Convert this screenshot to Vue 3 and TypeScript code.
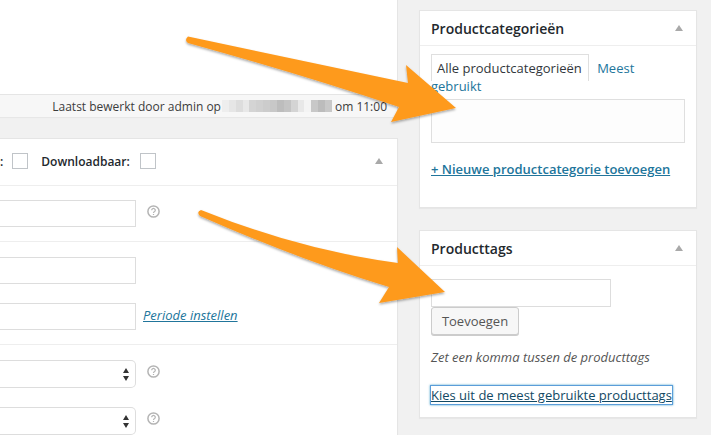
<script setup lang="ts">
const blurCells: string[] = ['#eee','#e6e6e6','#ddd','#e8e8e8','#d4d4d4','#d0d0d0','#ccc','#c8c8c8','#bdbdbd','#c4c4c4','#d4d4d4','#e8e8e8','#f4f4f4','#c8c8c8','#bcbcbc','#c8c8c8']
</script>

<template>
  <div class="page">
    <main class="main">
      <div class="editor"></div>
      <div class="status">
        <span>Laatst bewerkt door admin op</span>
        <span class="blur"><i v-for="(c, i) in blurCells" :key="i" :style="{ background: c }"></i></span>
        <span>om 11:00</span>
      </div>
      <section class="card product">
        <header class="product-head">
          <span>:</span><span class="check first"></span>
          <span class="dl">Downloadbaar:</span><span class="check"></span>
          <span class="tri left-tri"></span>
        </header>
        <div class="group g1">
          <div class="row">
            <span class="field"></span>
            <svg class="help" viewBox="0 0 13 13" width="13" height="13"><circle cx="6.5" cy="6.5" r="5.6" fill="none" stroke="#b4b4b4" stroke-width="1.5"/><path d="M4.7 5.2a1.8 1.7 0 1 1 2.8 1.4c-.7.4-1 .7-1 1.5M6.5 9v1.1" fill="none" stroke="#b4b4b4" stroke-width="1.2"/></svg>
          </div>
        </div>
        <div class="group g2">
          <div class="row"><span class="field"></span></div>
          <div class="row r2"><span class="field"></span><a class="period">Periode instellen</a></div>
        </div>
        <div class="group g3">
          <div class="row">
            <span class="field sel"><svg viewBox="0 0 6 13" width="6" height="13"><path d="M3 0 6 5H0zM3 13 0 8H6z" fill="#333"/></svg></span>
            <svg class="help" viewBox="0 0 13 13" width="13" height="13"><circle cx="6.5" cy="6.5" r="5.6" fill="none" stroke="#b4b4b4" stroke-width="1.5"/><path d="M4.7 5.2a1.8 1.7 0 1 1 2.8 1.4c-.7.4-1 .7-1 1.5M6.5 9v1.1" fill="none" stroke="#b4b4b4" stroke-width="1.2"/></svg>
          </div>
          <div class="row r2">
            <span class="field sel"><svg viewBox="0 0 6 13" width="6" height="13"><path d="M3 0 6 5H0zM3 13 0 8H6z" fill="#333"/></svg></span>
            <svg class="help" viewBox="0 0 13 13" width="13" height="13"><circle cx="6.5" cy="6.5" r="5.6" fill="none" stroke="#b4b4b4" stroke-width="1.5"/><path d="M4.7 5.2a1.8 1.7 0 1 1 2.8 1.4c-.7.4-1 .7-1 1.5M6.5 9v1.1" fill="none" stroke="#b4b4b4" stroke-width="1.2"/></svg>
          </div>
        </div>
      </section>
    </main>
    <aside class="side">
      <section class="card cat">
        <header class="box-head"><h2>Productcategorieën</h2><span class="tri"></span></header>
        <div class="cat-body">
          <div class="tabs"><span class="tab">Alle productcategorieën</span> <a class="tab-link first-word">Meest</a> <a class="tab-link">gebruikt</a></div>
          <div class="listbox"></div>
          <a class="add">+ Nieuwe productcategorie toevoegen</a>
        </div>
      </section>
      <section class="card tags">
        <header class="box-head"><h2>Producttags</h2><span class="tri"></span></header>
        <div class="tags-body">
          <span class="tag-input"></span>
          <button class="btn" type="button">Toevoegen</button>
          <p class="hint">Zet een komma tussen de producttags</p>
          <a class="focus-link">Kies uit de meest gebruikte producttags</a>
        </div>
      </section>
    </aside>
    <svg class="arrows" width="711" height="435" viewBox="0 0 711 435">
      <defs>
        <filter id="sh" x="-10%" y="-10%" width="120%" height="130%">
          <feDropShadow dx="0" dy="1.5" stdDeviation="1.2" flood-color="#000" flood-opacity=".35" />
        </filter>
      </defs>
      <path filter="url(#sh)" fill="#fe9a1e" d="M188 36.500 408 83 406 65 456 108 391 122 399 107Q300 74 188 43Q184 40 188 36.500Z" />
      <path filter="url(#sh)" fill="#fe9a1e" d="M201 210Q300 250 398 263L397 247 445 292 379 303 389 287Q300 260 200 216Q196 212 201 210Z" />
    </svg>
  </div>
</template>

<style>
html, body { margin: 0; background: #f1f1f1; }
</style>

<style scoped>
.page {
  position: relative;
  width: 711px;
  height: 435px;
  overflow: hidden;
  display: grid;
  grid-template-columns: 398px 1fr;
  background: #f1f1f1;
  color: #32373c;
  font-family: "Open Sans", sans-serif;
  font-size: 13px;
}
.main { display: flex; flex-direction: column; min-width: 0; }
.editor { height: 94px; background: #fff; border-right: 1px solid #e5e5e5; flex: none; }
.status {
  height: 23px; flex: none; box-sizing: border-box;
  display: flex; align-items: center; justify-content: flex-end;
  padding-right: 10px; gap: 1px;
  background: #f7f7f7; border-top: 1px solid #e5e5e5; border-right: 1px solid #e5e5e5;
  box-shadow: 0 1px 1px rgba(0,0,0,.04);
  font-size: 12px; color: #3c3c3c;
}
.blur { display: flex; height: 12px; width: 110px; margin: 0 2px 0 0; }
.blur i { flex: 1; }
.card { background: #fff; border: 1px solid #e5e5e5; box-shadow: 0 1px 1px rgba(0,0,0,.04); box-sizing: border-box; }
.product { margin-top: 21px; flex: 1; margin-bottom: -20px; border-left: none; }
.product-head { height: 47px; box-sizing: border-box; display: flex; align-items: center; padding-bottom: 2px; border-bottom: 1px solid #eee; font-weight: 600; font-size: 12px; color: #23282d; }
.check { width: 16px; height: 16px; box-sizing: border-box; border: 1px solid #c0c4c8; margin-left: 10px; }
.first { margin-left: 9px; }
.dl { margin-left: 13px; }
.tri { width: 0; height: 0; border-left: 4px solid transparent; border-right: 4px solid transparent; border-bottom: 6px solid #a9a9a9; margin-left: auto; }
.left-tri { margin-right: 14px; }
.group { border-bottom: 1px solid #eee; box-sizing: border-box; }
.group:last-child { border-bottom: none; }
.g1 { height: 56px; padding-top: 14px; }
.g2 { height: 103px; padding-top: 15px; }
.g3 { padding-top: 15px; }
.row { display: flex; align-items: flex-start; }
.r2 { margin-top: 19px; }
.field { width: 136px; height: 27px; box-sizing: border-box; border: 1px solid #ddd; border-left: none; background: #fff; display: flex; align-items: center; justify-content: flex-end; flex: none; }
.sel { border-radius: 0 5px 5px 0; height: 28px; padding-right: 6px; }
.help { margin: 5px 0 0 11px; flex: none; }
.period { color: #21759b; font-style: italic; font-size: 13px; text-decoration: underline; margin: 3px 0 0 7px; }
.side { display: flex; flex-direction: column; padding: 10px 14px 0 21px; gap: 22px; min-width: 0; }
.cat { height: 198px; flex: none; }
.tags { height: 188px; flex: none; }
.box-head { height: 35px; box-sizing: border-box; display: flex; align-items: center; padding: 0 13px 0 11px; border-bottom: 1px solid #eee; }
.box-head h2 { margin: 0; font-size: 14px; font-weight: 600; color: #23282d; }
.cat-body { padding: 8px 11px 0; }
.tabs { height: 45px; line-height: 18px; color: #21759b; }
.tab { display: inline-block; position: relative; z-index: 1; margin-bottom: -9px; border: 1px solid #dfdfdf; border-bottom: none; background: #fff; padding: 0 6px 0 5px; height: 27px; line-height: 26px; color: #32373c; box-sizing: border-box; }
.tab-link { display: inline-block; color: #21759b; }
.first-word { margin-left: 5px; }
.listbox { height: 44px; box-sizing: border-box; border: 1px solid #dfdfdf; background: #fdfdfd; }
.add { display: block; margin-top: 17px; font-weight: 600; color: #21759b; text-decoration: underline; }
.tags-body { padding: 13px 11px 0; display: flex; flex-direction: column; align-items: flex-start; }
.tag-input { width: 180px; height: 28px; box-sizing: border-box; border: 1px solid #ddd; }
.btn { width: 88px; height: 28px; padding: 0; font: inherit; color: #555; background: #f7f7f7; border: 1px solid #ccc; border-radius: 3px; box-shadow: 0 1px 0 #ccc; }
.hint { margin: 13px 0 0; font-style: italic; color: #555; }
.focus-link { margin: 20px 0 0; color: #124964; text-decoration: underline; box-shadow: 0 0 0 1px #5b9dd9, 0 0 2px 1px rgba(30,140,190,.8); }
.arrows { position: absolute; left: 0; top: 0; pointer-events: none; }
</style>
